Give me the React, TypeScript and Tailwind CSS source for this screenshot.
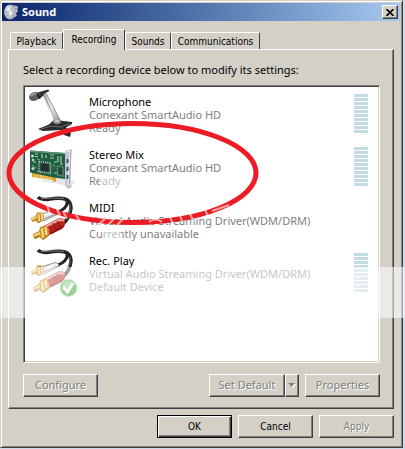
import React from 'react'

const raised = "border border-t-white border-l-white border-r-[#404040] border-b-[#404040] shadow-[inset_-1px_-1px_0_#808080]"
const sysFont = "font-['DejaVu_Sans_Condensed','Noto_Sans',sans-serif] text-[10px]"
const disabledText = "text-[#808080] [text-shadow:1px_1px_0_#fff]"

const MicIcon = () => (
    <svg width="48" height="48" viewBox="0 0 48 48" aria-hidden="true">
        <defs>
            <linearGradient id="stand" x1="0" x2="1" y1="0" y2="0">
                <stop offset="0" stopColor="#9a9a9a"/>
                <stop offset=".5" stopColor="#f2f2f2"/>
                <stop offset="1" stopColor="#8a8a8a"/>
            </linearGradient>
        </defs>
        <path d="M9 40L20 35.500L26 30L34 32L43 33V35L37 38.500L42 44L41 48L35 46L32 41L14 42Z" fill="#2b2b2b"/>
        <path d="M12 40L22 37L32 38L41 34.500" stroke="#6c6c6c" fill="none"/>
        <path d="M13.500 5L17.500 4L31 30.500Q31 35 25 33Z" fill="url(#stand)"/>
        <path d="M15 6L27 32M17.500 5L31 31" stroke="#8d8d8d" strokeWidth=".8"/>
        <ellipse cx="28" cy="32.500" rx="4" ry="2.800" fill="#8b8b8b"/>
        <ellipse cx="28" cy="31.800" rx="2.500" ry="1.500" fill="#c8c8c8"/>
        <path d="M7 4L19 .5L20.500 2L15 5L14 7L10 10Z" fill="#303030"/>
        <ellipse cx="5.500" cy="7.500" rx="5.500" ry="4.300" fill="#5e5e5e" transform="rotate(-20 5.500 7.500)"/>
        <path d="M2 7Q4 4 8 5" stroke="#a9a9a9" strokeWidth="1.500" fill="none"/>
        <path d="M8 4.500L11 9.500" stroke="#1f1f1f" strokeWidth="2"/>
    </svg>
)

const CardIcon = () => (
    <svg width="48" height="48" viewBox="0 0 48 48" aria-hidden="true">
        <path d="M10 39L36 34L46 40L40 46L31 42Z" fill="#e6e6e6"/>
        <path d="M3 30L27 35V40L24 39.500V38L3 35Z" fill="#dba62b"/>
        <path d="M6 32V35M9 32V36M12 33V37M15 33V37M18 34V38M21 35V38" stroke="#ffedA0" strokeWidth=".8"/>
        <path d="M1 8.500L36 11V37L25 35.500L1 30.500Z" fill="#1d5f41"/>
        <path d="M1 8.500L36 11V12.500L1 10Z" fill="#5a9274"/>
        <path d="M6 12H9M6 14.500H9M13 12V16M17 13V16M21 13H25M21 16H25M29 14V20M32 14V21M4 20H7M25 20H28M25 31H28M31 22H34" stroke="#b3cdb4" strokeWidth="1.200"/>
        <path d="M3 23L7 26M8 17L11 18M24 22L26 25M8 29L12 31" stroke="#79a98a"/>
        <circle cx="3.500" cy="14" r="1.500" fill="#c9d8cb"/>
        <circle cx="4" cy="18" r="1.300" fill="#c9d8cb"/>
        <circle cx="4" cy="26.500" r="1.500" fill="#c9d8cb"/>
        <path d="M10 19.500L21.500 21V31.500L10 29.500Z" fill="#2e4f45" stroke="#bfd0c5" strokeWidth="1.500" strokeDasharray="1 1"/>
        <path d="M12 21.500L19.500 22.500V29.500L12 28.200Z" fill="#22302f"/>
        <path d="M28.500 24L34 25V34L28.500 33Z" fill="#24453a" stroke="#a4c0ae" strokeWidth="1.200" strokeDasharray="1 1"/>
        <path d="M36 9L42.500 7L41 43L44 44.500L39 47L36 43Z" fill="#c3c5d4"/>
        <path d="M37.500 10L41 9L39 43" stroke="#f4f4f8" fill="none"/>
        <path d="M38.500 17V21M38.500 25V29M38.500 33V37" stroke="#4a5060" strokeWidth="2"/>
        <path d="M42 8L40.500 42" stroke="#8c90a1" strokeWidth=".7"/>
    </svg>
)

const CableIcon = ({ok = false}) => (
    <svg width="50" height="50" viewBox="0 0 50 50" aria-hidden="true">
        <path d="M9 2Q11 4.500 18 4.500Q30 2.500 36 4Q42 6 42 13Q41 23 33 30" stroke="#242424" strokeWidth="3.500" fill="none"/>
        <path d="M38 6Q39 11 33 15L27 18" stroke="#242424" strokeWidth="3" fill="none"/>
        <path d="M12 3.500Q26 2.500 35 3.500M41 9Q42 16 38 22" stroke="#8a8a8a" strokeWidth=".8" fill="none"/>
        <path d="M13 19L26 14.500L30 16L29 19L15 26Z" fill="#f3f3f3" stroke="#777" strokeWidth=".8"/>
        <path d="M15 24L28 18.500" stroke="#a8a8a8" strokeWidth="1.500"/>
        <path d="M2 23L7 20.500L8 17.500L13 17.500L15 21L14 26L9 28.500L7 26L3 27Z" fill="#c99030"/>
        <path d="M3 24L7.500 22M9.500 19L10.500 26M12.500 18.500L13.500 25" stroke="#ffe39a" strokeWidth="1.500" fill="none"/>
        <path d="M15 31L29 23.500Q34 22.500 36 25L36 30L33 34L20 40Z" fill="#b8231c"/>
        <path d="M17 31.500L30 25L35 25.500" stroke="#f0a79b" strokeWidth="2.200" fill="none"/>
        <path d="M24 28L28 36M28 26L32 34" stroke="#7c1714"/>
        <path d="M22 38.500L35 31" stroke="#831612" strokeWidth="1.500"/>
        <path d="M4 39L10 36L11 32L16 30.500L20 34L20 40L14 45L10 42L5 44Z" fill="#cf942b"/>
        <path d="M5.500 40.500L11 38M13 33.500L14 43M16.500 32L17.500 40" stroke="#ffe49b" strokeWidth="1.800" fill="none"/>
        <path d="M6 43.500L10 41.500M14 44.500L20 40" stroke="#8c5a12" fill="none"/>
        {ok && <>
            <circle cx="39.500" cy="40" r="8.500" fill="#1f981f" stroke="#a3d3a0"/>
            <path d="M33 37Q39 28 46 37Q40 38 33 43Z" fill="#79cc70"/>
            <path d="M34.500 39L38.500 44L44 35" stroke="#fff" strokeWidth="3" fill="none"/>
        </>}
    </svg>
)

const SpeakerIcon = () => (
    <svg width="16" height="16" viewBox="0 0 16 16" aria-hidden="true">
        <path d="M8 1L14 2L13.500 5L14 7L12 10L13 12L9 14Z" fill="#9aa2a8"/>
        <path d="M11 3L13 4M10 7L13 7M11 10L12 12" stroke="#d9dde0"/>
        <ellipse cx="6" cy="8" rx="6" ry="7.500" fill="#a6aeb4"/>
        <ellipse cx="5.500" cy="7.500" rx="4.800" ry="6.300" fill="#c4cace"/>
        <path d="M2 4L9 12M3 12L9 3M1 8H10" stroke="#8f999f" strokeWidth=".8"/>
        <ellipse cx="4.500" cy="5" rx="2" ry="2.500" fill="#e6e9eb"/>
        <ellipse cx="6.500" cy="9" rx="1.800" ry="2.200" fill="#eef0f1"/>
    </svg>
)

const devices = [
    {name: "Microphone", driver: "Conexant SmartAudio HD", status: "Ready", meter: true, icon: <MicIcon/>},
    {name: "Stereo Mix", driver: "Conexant SmartAudio HD", status: "Ready", meter: true, icon: <CardIcon/>},
    {name: "MIDI", driver: "Virtual Audio Streaming Driver(WDM/DRM)", status: "Currently unavailable", meter: false, icon: <CableIcon/>},
    {name: "Rec. Play", driver: "Virtual Audio Streaming Driver(WDM/DRM)", status: "Default Device", meter: true, icon: <CableIcon ok/>},
]

const Meter = () => (
    <div className="flex flex-col gap-px pt-[7px]">
        {Array.from({length: 10}, (_, i) => <div key={i} className="h-[3px] w-[14px] bg-[#c0dce2]"/>)}
    </div>
)

const Tab = ({label, active = false, className = ""}: {label: string, active?: boolean, className?: string}) => (
    <button role="tab" aria-selected={active}
            className={`${sysFont} rounded-t-[2px] border-t border-l border-r border-t-white border-l-white border-r-[#404040] bg-[#d4d0c8] ${active ? "relative -mb-px h-[21px] pb-[2px]" : "h-[17px]"} ${className}`}>
        {label}
    </button>
)

const App = () => {
    return (
        <div className="relative w-full overflow-hidden bg-[#cdd9e9] pr-[2px] pb-px font-['Noto_Sans',sans-serif] text-[11px] text-black">
            <div className="border border-t-[#d4d0c8] border-l-[#d4d0c8] border-r-[#404040] border-b-[#404040] bg-[#d4d0c8] pt-[2px] pr-[2px] pb-[9px] pl-px shadow-[inset_1px_1px_0_#fff,inset_-1px_-1px_0_#808080]">
                <div className="flex h-[18px] items-center gap-[2px] bg-linear-to-r from-[#0a246a] to-[#a6caf0] px-[2px]">
                    <SpeakerIcon/>
                    <h1 className="grow font-bold text-white">Sound</h1>
                    <button aria-label="Close" className={`${raised} flex h-[14px] w-4 items-center justify-center bg-[#d4d0c8]`}>
                        <svg width="8" height="7" viewBox="0 0 8 7"><path d="M.5 0L7.500 7M7.500 0L.5 7" stroke="#000" strokeWidth="1.600"/></svg>
                    </button>
                </div>

                <div className="px-[6px] pt-2">
                    <div role="tablist" className="flex items-end pl-[2px]">
                        <Tab label="Playback" className="w-[53px]"/>
                        <Tab label="Recording" active className="w-[62px]"/>
                        <Tab label="Sounds" className="w-[46px]"/>
                        <Tab label="Communications" className="w-[89px]"/>
                    </div>

                    <div role="tabpanel" className={`${raised} pt-3 pr-[13px] pb-[11px] pl-[14px]`}>
                        <p className="mb-2 leading-[15px]">Select a recording device below to modify its settings:</p>
                        <ul className="min-h-[278px] border border-t-[#808080] border-l-[#808080] border-r-white border-b-white bg-white p-px shadow-[inset_1px_1px_0_#404040,inset_-1px_-1px_0_#d4d0c8]">
                            {devices.map((d) => (
                                <li key={d.name} className="flex h-[53px] pr-[10px] pl-1">
                                    <div className="w-[60px] shrink-0 pt-[2px]">{d.icon}</div>
                                    <div className="grow pt-2 leading-[13px] text-[#808080]">
                                        <h2 className="text-black">{d.name}</h2>
                                        <p>{d.driver}</p>
                                        <p>{d.status}</p>
                                    </div>
                                    {d.meter && <Meter/>}
                                </li>
                            ))}
                        </ul>
                        <div className="mt-[11px] flex gap-[6px]">
                            <button disabled className={`${raised} ${disabledText} h-[23px] w-[75px]`}>Configure</button>
                            <div className="ml-auto flex">
                                <button disabled className={`${raised} ${disabledText} h-[23px] w-[76px]`}>Set Default</button>
                                <button disabled aria-label="More default options" className={`${raised} flex h-[23px] w-[14px] items-center justify-center`}>
                                    <svg width="8" height="5" viewBox="0 0 8 5"><path d="M1 1H8L4.500 5Z" fill="#fff"/><path d="M0 0H7L3.500 4Z" fill="#808080"/></svg>
                                </button>
                            </div>
                            <button disabled className={`${raised} ${disabledText} h-[23px] w-[75px]`}>Properties</button>
                        </div>
                    </div>

                    <div className="mt-[6px] flex justify-end gap-[6px]">
                        <button className={`${sysFont} h-[23px] w-[75px] border border-black shadow-[inset_1px_1px_0_#fff,inset_-1px_-1px_0_#404040,inset_-2px_-2px_0_#808080]`}>OK</button>
                        <button className={`${raised} ${sysFont} h-[23px] w-[75px]`}>Cancel</button>
                        <button disabled className={`${raised} ${sysFont} ${disabledText} h-[23px] w-[75px]`}>Apply</button>
                    </div>
                </div>
            </div>

            {/* hand-drawn marker and the faded watermark over the dialog */}
            <svg className="pointer-events-none absolute top-0 left-0" width="405" height="449" viewBox="0 0 405 449" aria-hidden="true">
                <ellipse cx="132.500" cy="173" rx="123.500" ry="49.500" fill="none" stroke="#ed1c24" strokeWidth="5"/>
                <g stroke="#fff" strokeOpacity=".6" fill="none" strokeWidth="2">
                    <path d="M47 205L50 214M56 207L60 216M63 211L67 219M76 215L80 221M99 224L105 219M108 225L114 219M117 225L123 219"/>
                    <path d="M149 222Q156 217 162 222M170 217L173 224M180 216L183 223M190 214L194 222M205 210L209 218M212 211L229 205"/>
                </g>
                <path d="M99 176H122V188H99ZM103 228H121V240H103Z" fill="#fff" fillOpacity=".5"/>
            </svg>
            <div className="pointer-events-none absolute top-[267px] left-0 h-[51px] w-full bg-white/55"/>
        </div>
    )
}
export default App
